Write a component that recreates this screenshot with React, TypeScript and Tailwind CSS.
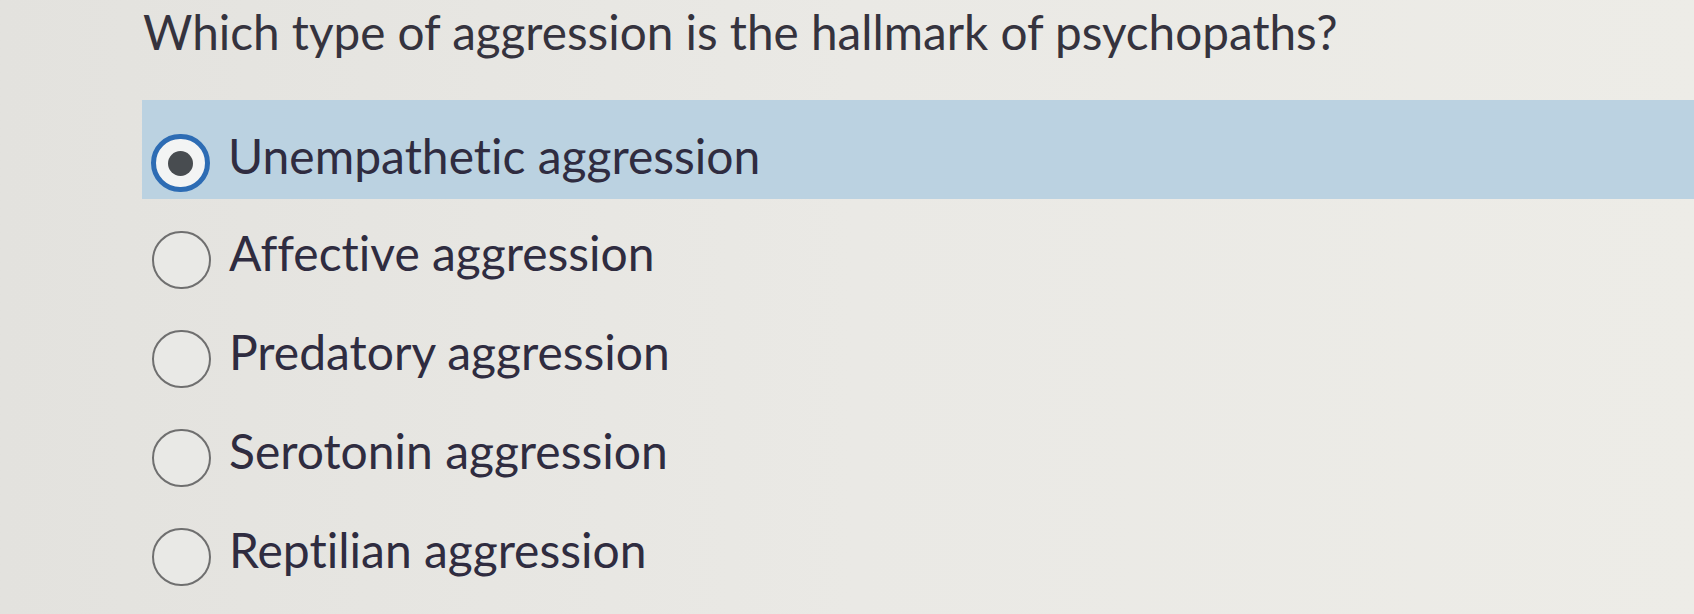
import React from "react";

const options = [
  "Unempathetic aggression",
  "Affective aggression",
  "Predatory aggression",
  "Serotonin aggression",
  "Reptilian aggression",
];

function Radio({ checked }: { checked: boolean }) {
  if (checked) {
    return (
      <span className="mt-[6px] flex h-[58px] w-[59px] shrink-0 items-center justify-center rounded-full border-[5px] border-[#2d6cb4] bg-[#f3f4f4]">
        <span className="h-[25px] w-[25px] rounded-full bg-[#484c50]" />
      </span>
    );
  }
  return (
    <span className="mt-[6px] block h-[58px] w-[59px] shrink-0 rounded-full border-[2.5px] border-[#6f6f6f] bg-[#e9e9e6]" />
  );
}

function Option({ label, checked }: { label: string; checked: boolean }) {
  return (
    <label className="flex items-start gap-[18px]">
      <Radio checked={checked} />
      <span className="text-[48px] leading-[56px] text-[#2f2c40] whitespace-nowrap [font-variant-ligatures:none]">
        {label}
      </span>
    </label>
  );
}

export default function App() {
  return (
    <div
      className="h-[614px] w-full overflow-hidden bg-gradient-to-r from-[#e3e2de] via-[#eae9e5] to-[#edece7] pt-[4px]"
      style={{ fontFamily: "Lato, 'Noto Sans', sans-serif" }}
    >
      <h1 className="pl-[143px] text-[47.7px] leading-[56px] font-normal text-[#35333e] whitespace-nowrap [font-variant-ligatures:none]">
        Which type of aggression is the hallmark of psychopaths?
      </h1>
      <div className="mt-[40px] ml-[142px] bg-[#bbd2e1] pt-[28px] pb-[7px] pl-[9px]">
        <Option label={options[0]} checked />
      </div>
      <div className="mt-[26px] flex flex-col gap-[35px] pl-[152px]">
        {options.slice(1).map((o) => (
          <Option key={o} label={o} checked={false} />
        ))}
      </div>
    </div>
  );
}
